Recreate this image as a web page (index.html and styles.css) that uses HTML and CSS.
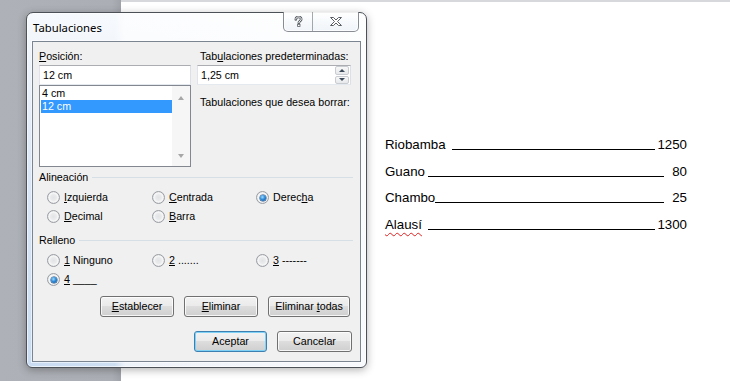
FILE: index.html
```html
<!DOCTYPE html>
<html lang="es">
<head>
<meta charset="UTF-8">
<title>Tabulaciones</title>
<link rel="stylesheet" href="styles.css">
</head>
<body>
<div class="screen">
  <div class="gutter"></div>
  <main class="page">
    <div class="doc">
      <p class="tab-line"><span>Riobamba</span><span class="leader sp"></span><span class="num">1250</span></p>
      <p class="tab-line"><span>Guano</span><span class="leader sp-s pad"></span><span class="num">80</span></p>
      <p class="tab-line"><span>Chambo</span><span class="leader pad"></span><span class="num">25</span></p>
      <p class="tab-line"><span class="typo">Alausí</span><span class="leader sp"></span><span class="num">1300</span></p>
    </div>
  </main>

  <section class="dialog">
    <header class="titlebar">
      <span class="title">Tabulaciones</span>
      <div class="caption">
        <span class="cap help">
          <svg width="9" height="11" viewBox="0 0 9 11">
            <path d="M1.8 3.4C1.8 1.8 3 1 4.5 1S7.2 1.9 7.2 3.2C7.2 4.9 4.8 5 4.8 7" fill="none" stroke="#5a5f66" stroke-width="2.6" stroke-linecap="round"/>
            <path d="M1.8 3.4C1.8 1.8 3 1 4.5 1S7.2 1.9 7.2 3.2C7.2 4.9 4.8 5 4.8 7" fill="none" stroke="#fff" stroke-width="1"/>
            <rect x="3.6" y="8.3" width="2.4" height="2.2" fill="#fff" stroke="#5a5f66" stroke-width="0.8"/>
          </svg>
        </span>
        <span class="cap close">
          <svg width="12" height="9" viewBox="0 0 12 9">
            <path d="M0.5 0.5H3.5L6 3L8.5 0.5H11.5L7.5 4.5L11.5 8.5H8.5L6 6L3.5 8.5H0.5L4.5 4.5Z" fill="#fff" stroke="#5a5f66" stroke-width="1" stroke-linejoin="round"/>
          </svg>
        </span>
      </div>
    </header>

    <div class="client">
      <div class="top">
        <div class="col-left">
          <span class="lbl"><u>P</u>osición:</span>
          <div class="textbox">12 cm</div>
          <div class="listbox">
            <div class="items">
              <div class="item">4 cm</div>
              <div class="item sel">12 cm</div>
            </div>
            <div class="vscroll"><span class="arr up"></span><span class="arr down"></span></div>
          </div>
        </div>
        <div class="col-right">
          <span class="lbl">Tab<u>u</u>laciones predeterminadas:</span>
          <div class="textbox">
            1,25 cm
            <div class="spin"><span class="spin-btn"><i class="tri up"></i></span><span class="spin-btn"><i class="tri down"></i></span></div>
          </div>
          <span class="lbl note">Tabulaciones que desea borrar:</span>
        </div>
      </div>

      <div class="group">
        <div class="group-head">Alineación</div>
        <div class="radios">
          <label class="radio-item"><span class="radio"></span><span><u>I</u>zquierda</span></label>
          <label class="radio-item"><span class="radio"></span><span><u>C</u>entrada</span></label>
          <label class="radio-item"><span class="radio on"></span><span>Derec<u>h</u>a</span></label>
          <label class="radio-item"><span class="radio"></span><span><u>D</u>ecimal</span></label>
          <label class="radio-item"><span class="radio"></span><span><u>B</u>arra</span></label>
        </div>
      </div>

      <div class="group">
        <div class="group-head">Relleno</div>
        <div class="radios">
          <label class="radio-item"><span class="radio"></span><span><u>1</u> Ninguno</span></label>
          <label class="radio-item"><span class="radio"></span><span><u>2</u> .......</span></label>
          <label class="radio-item"><span class="radio"></span><span><u>3</u> -------</span></label>
          <label class="radio-item"><span class="radio on"></span><span><u>4</u> ____</span></label>
        </div>
      </div>

      <div class="btn-row first">
        <button class="btn"><u>E</u>stablecer</button>
        <button class="btn"><u>E</u>liminar</button>
        <button class="btn wide">Eliminar <u>t</u>odas</button>
      </div>
      <div class="btn-row last">
        <button class="btn default">Aceptar</button>
        <button class="btn">Cancelar</button>
      </div>
    </div>
  </section>
</div>
</body>
</html>
```

FILE: styles.css
```css
* {
  box-sizing: border-box;
}

body {
  margin: 0;
  width: 730px;
  height: 381px;
  overflow: hidden;
  font-family: "Liberation Sans", Arial, sans-serif;
  color: #000;
}

.screen {
  position: relative;
  display: flex;
  height: 381px;
  background: #abaeb4;
}

.gutter {
  width: 121px;
  flex: none;
  background: linear-gradient(90deg, #aeb1b7 0, #abaeb4 112px, #9fa2a8 121px);
}

.page {
  flex: 1;
  background: #fff;
  border-top: 2px solid #d6d8dc;
  padding-top: 130px;
}

/* document text with tab leaders */
.doc {
  margin-left: 264px;
  width: 302px;
}

.tab-line {
  display: flex;
  align-items: baseline;
  margin: 0;
  height: 26.7px;
  line-height: 26.7px;
  font-size: 13.3px;
}

.leader {
  flex: 1;
  border-bottom: 1px solid #000;
  transform: translateY(1px);
  margin-right: 2px;
}

.leader.sp { margin-left: 6px; }
.leader.sp-s { margin-left: 3px; }
.leader.pad { margin-right: 8px; }

.typo {
  text-decoration: underline wavy #e02020;
  text-decoration-thickness: 1px;
  text-underline-offset: 3px;
}

/* dialog window */
.dialog {
  position: absolute;
  left: 26px;
  top: 12px;
  width: 341px;
  height: 356px;
  display: flex;
  flex-direction: column;
  border: 1px solid #4c5157;
  border-radius: 7px 7px 6px 6px;
  background:
    linear-gradient(180deg, rgba(255,255,255,.85) 0, rgba(255,255,255,.35) 45%, rgba(255,255,255,.05) 100%),
    linear-gradient(90deg, #c6daf1 0, #cbddf2 88px, #edf2f9 98px, #f7f9fc 100%);
  box-shadow: 0 2px 9px rgba(0,0,0,.3), inset 0 0 0 1px rgba(255,255,255,.6);
}

.titlebar {
  height: 28px;
  flex: none;
  display: flex;
  align-items: center;
  padding-left: 6px;
}

.title {
  font-family: "Noto Sans", "Liberation Sans", sans-serif;
  font-size: 11.3px;
  text-shadow: 0 0 6px #fff, 0 0 10px #fff, 0 0 14px #fff;
}

.caption {
  margin-left: auto;
  margin-right: 7px;
  margin-top: -1px;
  align-self: flex-start;
  display: flex;
  height: 20px;
  border: 1px solid rgba(60,68,78,.6);
  border-top: 0;
  border-radius: 0 0 5px 5px;
  background: linear-gradient(180deg, rgba(255,255,255,.7), rgba(232,238,245,.6));
  box-shadow: inset 0 0 0 1px rgba(255,255,255,.7);
}

.cap {
  display: flex;
  align-items: center;
  justify-content: center;
}

.cap.help { width: 28px; }

.cap.close {
  width: 46px;
  border-left: 1px solid rgba(60,68,78,.45);
}

.client {
  flex: 1;
  margin: 0 5px 5px;
  border: 1px solid #7b8591;
  background: #f0f0f0;
  padding: 8px 7px 0 6px;
  font-size: 10.7px;
  line-height: 13px;
  box-shadow: 0 0 0 1px rgba(255,255,255,.55);
}

.top {
  display: flex;
  gap: 6px;
}

.col-left { width: 152px; }
.col-right { width: 154px; }

.lbl {
  display: block;
  height: 13px;
  white-space: nowrap;
}

.col-right .lbl { padding-left: 3px; }

.lbl.note { margin-top: 11px; }

.textbox {
  margin-top: 2px;
  height: 20px;
  display: flex;
  align-items: center;
  padding-left: 3px;
  background: #fff;
  border: 1px solid;
  border-color: #abadb3 #dbdfe6 #e3e9ef #e2e3ea;
}

.spin {
  margin-left: auto;
  width: 15px;
  height: 18px;
  display: flex;
  flex-direction: column;
  gap: 1px;
  padding: 0 1px 0 0;
}

.spin-btn {
  flex: 1;
  display: flex;
  align-items: center;
  justify-content: center;
  border: 1px solid #c9ccd1;
  border-radius: 2px;
  background: linear-gradient(#f8f8f8, #e6e8eb);
}

.tri {
  width: 0;
  height: 0;
  border-left: 3px solid transparent;
  border-right: 3px solid transparent;
}

.tri.up { border-bottom: 3px solid #3d4a5c; }
.tri.down { border-top: 3px solid #3d4a5c; }

.listbox {
  height: 82px;
  display: flex;
  background: #fff;
  border: 1px solid #828790;
}

.items {
  flex: 1;
  padding: 1px 0 0 1px;
}

.item {
  height: 13px;
  padding-left: 1px;
}

.item.sel {
  background: #3399ff;
  color: #fff;
}

.vscroll {
  width: 18px;
  display: flex;
  flex-direction: column;
  justify-content: space-between;
  align-items: center;
  padding: 10px 0 8px;
  background: #f6f6f6;
}

.arr {
  width: 0;
  height: 0;
  border-left: 3.5px solid transparent;
  border-right: 3.5px solid transparent;
}

.arr.up { border-bottom: 4px solid #a7a7a7; }
.arr.down { border-top: 4px solid #a7a7a7; }

/* groups */
.group { margin-top: 4px; }
.group + .group { margin-top: 8px; }

.group-head {
  display: flex;
  align-items: center;
  height: 13px;
}

.group-head::after {
  content: "";
  flex: 1;
  margin-left: 4px;
  border-top: 1px solid #d5dfe5;
}

.radios {
  display: grid;
  grid-template-columns: 105px 104px auto;
  grid-auto-rows: 19px;
  padding: 4px 0 0 8px;
}

.radio-item {
  display: flex;
  align-items: center;
  gap: 4px;
  white-space: nowrap;
}

.radio {
  position: relative;
  width: 13px;
  height: 13px;
  flex: none;
  border-radius: 50%;
  border: 1px solid #9a9ea4;
  background: radial-gradient(circle at 50% 50%, #e2e3e5 0, #eaebed 3px, #f7f7f7 4.5px, #d9dadc 6px);
}

.radio.on::after {
  content: "";
  position: absolute;
  left: 2.5px;
  top: 2.5px;
  width: 6px;
  height: 6px;
  border-radius: 50%;
  background: radial-gradient(circle at 40% 35%, #9fdcff 0, #2f8ad8 45%, #124f91 100%);
  box-shadow: 0 0 0 0.5px #1b4c82;
}

/* buttons */
.btn-row {
  display: flex;
  justify-content: flex-end;
  gap: 10px;
}

.btn-row.first {
  margin-top: 7px;
  margin-right: 3px;
}

.btn-row.last {
  margin-top: 14px;
  margin-right: 1px;
}

.btn {
  width: 74px;
  height: 21px;
  padding: 0;
  font: inherit;
  color: #000;
  border: 1px solid #707070;
  border-radius: 3px;
  background: linear-gradient(#f2f2f2 0, #ebebeb 45%, #dddddd 50%, #cfcfcf 100%);
  box-shadow: inset 0 0 0 1px rgba(255,255,255,.8);
}

.btn.wide { width: 82px; }

.btn.default {
  width: 73px;
  border-color: #3c7fb1;
  box-shadow: inset 0 0 0 1px #7fd2f6;
}

.btn-row.last .btn:last-child { width: 75px; }
```
